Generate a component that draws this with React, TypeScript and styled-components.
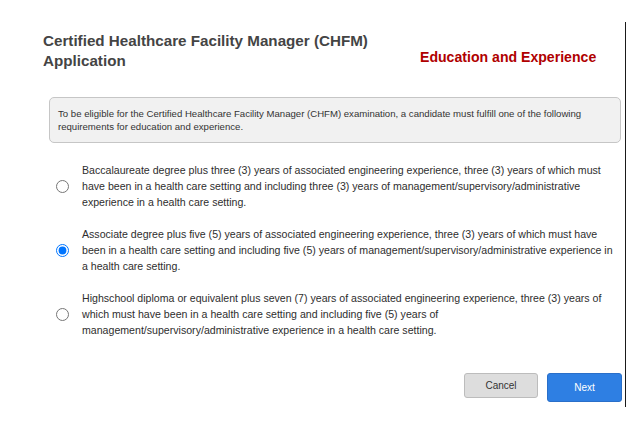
import React, { useState } from 'react'
import styled, { createGlobalStyle } from 'styled-components'

const GlobalStyle = createGlobalStyle`
  html, body {
    margin: 0;
    padding: 0;
    background: #fff;
  }

  body {
    font-family: "Liberation Sans", Arial, sans-serif;
  }
`

const options = [
  'Baccalaureate degree plus three (3) years of associated engineering experience, three (3) years of which must have been in a health care setting and including three (3) years of management/supervisory/administrative experience in a health care setting.',
  'Associate degree plus five (5) years of associated engineering experience, three (3) years of which must have been in a health care setting and including five (5) years of management/supervisory/administrative experience in a health care setting.',
  'Highschool diploma or equivalent plus seven (7) years of associated engineering experience, three (3) years of which must have been in a health care setting and including five (5) years of management/supervisory/administrative experience in a health care setting.',
]

const App = () => {
  const [selected, setSelected] = useState(1)

  return (
    <>
      <GlobalStyle />
      <Dialog>
        <Header>
          <Title>Certified Healthcare Facility Manager (CHFM) Application</Title>
          <Step>Education and Experience</Step>
        </Header>

        <Notice>
          To be eligible for the Certified Healthcare Facility Manager (CHFM) examination, a candidate must fulfill one of the following
          requirements for education and experience.
        </Notice>

        <Options>
          {options.map((text, i) => (
            <Option key={i}>
              <Radio
                type="radio"
                name="education"
                checked={selected === i}
                onChange={() => setSelected(i)}
              />
              <OptionText>{text}</OptionText>
            </Option>
          ))}
        </Options>

        <Footer>
          <Button type="button">Cancel</Button>
          <Button type="button" $primary>Next</Button>
        </Footer>
      </Dialog>
    </>
  )
}

const Dialog = styled.div`
  box-sizing: border-box;
  width: 626px;
  height: 385px;
  margin-top: 22px;
  padding: 9px 3px 0 43px;
  border-right: 1px solid #1a1a1a;
  display: flex;
  flex-direction: column;
`

const Header = styled.div`
  display: flex;
  align-items: center;
`

const Title = styled.h1`
  margin: 0;
  width: 340px;
  font-size: 15.2px;
  line-height: 20px;
  font-weight: bold;
  color: #444;
`

const Step = styled.h2`
  margin: 11px 0 0 37px;
  font-size: 14.1px;
  font-weight: bold;
  color: #b00000;
`

const Notice = styled.div`
  margin: 26px 1px 0 6px;
  padding: 9px 8px;
  background: #f1f1f1;
  border: 1px solid #c6c6c6;
  border-radius: 5px;
  font-size: 9.6px;
  line-height: 13px;
  color: #333;
`

const Options = styled.div`
  margin: 19px 0 0 13px;
  display: flex;
  flex-direction: column;
  gap: 16px;
`

const Option = styled.label`
  display: flex;
  align-items: center;
  gap: 13px;
  cursor: pointer;
`

const Radio = styled.input`
  margin: 0;
  width: 13px;
  height: 13px;
  flex-shrink: 0;
  accent-color: #0075ff;
`

const OptionText = styled.span`
  width: 531px;
  font-size: 10.6px;
  line-height: 16px;
  color: #2e2e2e;
`

const Footer = styled.div`
  margin-top: auto;
  margin-bottom: 5px;
  display: flex;
  justify-content: flex-end;
  align-items: flex-start;
  gap: 9px;
`

const Button = styled.button<{ $primary?: boolean }>`
  box-sizing: border-box;
  width: ${(props) => (props.$primary ? '75px' : '74px')};
  height: ${(props) => (props.$primary ? '29px' : '25px')};
  border-radius: 3px;
  border: 1px solid ${(props) => (props.$primary ? '#2a6fc9' : '#bcbcbc')};
  background: ${(props) => (props.$primary ? '#2e7fe3' : '#dddddd')};
  color: ${(props) => (props.$primary ? '#fff' : '#333')};
  font-family: "Liberation Sans", Arial, sans-serif;
  font-size: 10px;
  cursor: pointer;
`

export default App
